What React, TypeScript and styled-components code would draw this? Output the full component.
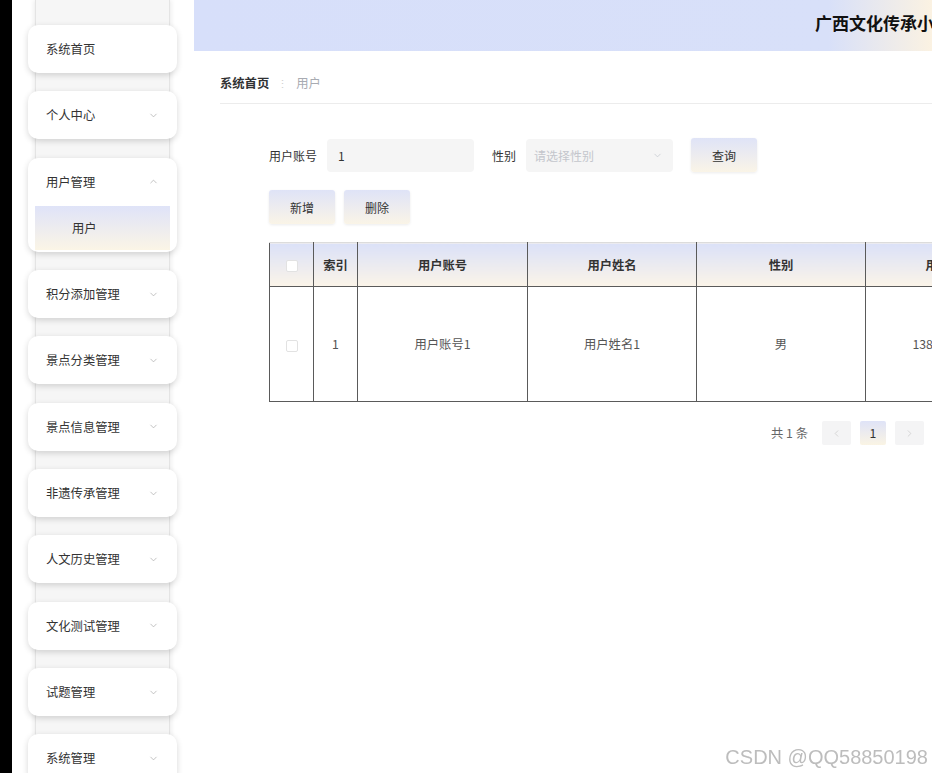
import { createGlobalStyle, styled } from 'styled-components';
import { ChevronDown, ChevronUp, ChevronLeft, ChevronRight } from 'lucide-react';

const GlobalStyle = createGlobalStyle`
  html, body {
    margin: 0;
    padding: 0;
    background: #fff;
    font-family: "Noto Sans CJK SC", "Noto Sans", "Liberation Sans", sans-serif;
    font-size: 13px;
    color: #333;
  }
  * { box-sizing: border-box; }
`;

interface MenuEntry {
  name: string;
  arrow: boolean;
  children?: string[];
}

const menus: MenuEntry[] = [
  { name: '系统首页', arrow: false },
  { name: '个人中心', arrow: true },
  { name: '用户管理', arrow: true, children: ['用户'] },
  { name: '积分添加管理', arrow: true },
  { name: '景点分类管理', arrow: true },
  { name: '景点信息管理', arrow: true },
  { name: '非遗传承管理', arrow: true },
  { name: '人文历史管理', arrow: true },
  { name: '文化测试管理', arrow: true },
  { name: '试题管理', arrow: true },
  { name: '系统管理', arrow: true },
];

const columns = [
  { title: '', width: 44 },
  { title: '索引', width: 44 },
  { title: '用户账号', width: 170 },
  { title: '用户姓名', width: 169 },
  { title: '性别', width: 169 },
  { title: '用户手机', width: 169 },
  { title: '头像', width: 169 },
];

const row = ['', '1', '用户账号1', '用户姓名1', '男', '13823888881', ''];

export default function App() {
  return (
    <>
      <GlobalStyle />
      <Page>
        <Sidebar>
          <MenuColumn>
            {menus.map((m) => (
              <MenuCard key={m.name}>
                <MenuTitle>
                  <span>{m.name}</span>
                  {m.arrow &&
                    (m.children ? (
                      <ChevronUp size={11} strokeWidth={1.5} color="#a8a8a8" />
                    ) : (
                      <ChevronDown size={11} strokeWidth={1.5} color="#a8a8a8" />
                    ))}
                </MenuTitle>
                {m.children?.map((c) => (
                  <SubItem key={c}>{c}</SubItem>
                ))}
              </MenuCard>
            ))}
          </MenuColumn>
        </Sidebar>
        <Main>
          <Header>
            <Title>广西文化传承小程序管理系统</Title>
          </Header>
          <Content>
            <Breadcrumb>
              <Crumb $current>系统首页</Crumb>
              <Sep>⋮</Sep>
              <Crumb>用户</Crumb>
            </Breadcrumb>

            <Panel>
              <SearchRow>
                <Label>用户账号</Label>
                <Field>1</Field>
                <Label $gap>性别</Label>
                <Field $placeholder>
                  <span>请选择性别</span>
                  <ChevronDown size={11} strokeWidth={1.5} color="#c0c4cc" />
                </Field>
                <GradientButton $ml={18}>查询</GradientButton>
              </SearchRow>

              <ActionRow>
                <GradientButton>新增</GradientButton>
                <GradientButton>删除</GradientButton>
              </ActionRow>

              <Table>
                <thead>
                  <tr>
                    {columns.map((c, i) => (
                      <Th key={i} style={{ width: c.width, minWidth: c.width }}>
                        {i === 0 ? <Check /> : c.title}
                      </Th>
                    ))}
                  </tr>
                </thead>
                <tbody>
                  <tr>
                    {row.map((v, i) => (
                      <Td key={i}>{i === 0 ? <Check /> : v}</Td>
                    ))}
                  </tr>
                </tbody>
              </Table>

              <Pager>
                <Total>共 1 条</Total>
                <PageBtn $disabled>
                  <ChevronLeft size={11} strokeWidth={1.5} color="#c8c8c8" />
                </PageBtn>
                <PageBtn $active>1</PageBtn>
                <PageBtn $disabled>
                  <ChevronRight size={11} strokeWidth={1.5} color="#c8c8c8" />
                </PageBtn>
              </Pager>
            </Panel>
          </Content>
        </Main>
      </Page>
      <Watermark>CSDN @QQ58850198</Watermark>
    </>
  );
}

const Page = styled.div`
  display: flex;
  width: 100vw;
  height: 100vh;
  overflow: hidden;
`;

const Sidebar = styled.aside`
  flex: 0 0 194px;
  height: 100%;
  border-left: 12px solid #000;
  background: #fff;
  overflow: hidden;
`;

const MenuColumn = styled.div`
  margin-left: 23px;
  width: 135px;
  min-height: 100%;
  padding-top: 25px;
  display: flex;
  flex-direction: column;
  gap: 18.35px;
  background: #f6f6f6;
  border-left: 1px solid #e4e4e4;
  border-right: 1px solid #e4e4e4;
  box-shadow: 2px 0 4px rgba(0, 0, 0, 0.06), -2px 0 4px rgba(0, 0, 0, 0.06);
`;

const MenuCard = styled.div`
  flex-shrink: 0;
  margin: 0 -8px;
  background: #fff;
  border-radius: 10px;
  box-shadow: 0 2px 6px rgba(0, 0, 0, 0.16);
  overflow: hidden;
`;

const MenuTitle = styled.div`
  height: 48px;
  padding: 0 18px;
  display: flex;
  align-items: center;
  justify-content: space-between;
  color: #333;
  font-size: 12.3px;
`;

const SubItem = styled.div`
  margin: 0 7px 2px;
  height: 44px;
  padding-left: 37px;
  display: flex;
  align-items: center;
  font-size: 12.3px;
  color: #333;
  background: linear-gradient(180deg, #dfe3f8 0%, #fbf5e6 100%);
`;

const Main = styled.main`
  flex: 1;
  min-width: 0;
  overflow: hidden;
`;

const Header = styled.header`
  height: 51px;
  display: flex;
  align-items: center;
  padding-left: 621px;
  background: linear-gradient(90deg, #d7dffa 0%, #d8e0f9 86%, #fbf2e2 100%);
  white-space: nowrap;
  overflow: hidden;
`;

const Title = styled.h1`
  margin: -6px 0 0;
  font-size: 17px;
  font-weight: 700;
  color: #111;
`;

const Content = styled.section`
  padding-left: 26px;
`;

const Breadcrumb = styled.nav`
  height: 53px;
  padding: 22px 0 10px;
  display: flex;
  align-items: center;
  gap: 8px;
  border-bottom: 1px solid #ececec;
`;

const Crumb = styled.span<{ $current?: boolean }>`
  font-size: 12.3px;
  font-weight: ${(p) => (p.$current ? 700 : 400)};
  color: ${(p) => (p.$current ? '#303133' : '#a8abb2')};
`;

const Sep = styled.span`
  color: #d0d0d0;
  font-size: 11px;
`;

const Panel = styled.div`
  padding: 34px 0 0 49px;
`;

const SearchRow = styled.div`
  display: flex;
  align-items: center;
  height: 34px;
`;

const Label = styled.span<{ $gap?: boolean }>`
  margin-left: ${(p) => (p.$gap ? '18px' : '0')};
  margin-right: 10px;
  font-size: 12px;
  color: #333;
`;

const Field = styled.div<{ $placeholder?: boolean }>`
  width: 147px;
  height: 33px;
  display: flex;
  align-items: center;
  justify-content: space-between;
  background: #f5f5f5;
  border-radius: 4px;
  font-size: 12px;
  color: ${(p) => (p.$placeholder ? '#c4c6cc' : '#333')};
  padding-left: ${(p) => (p.$placeholder ? '8px' : '11px')};
  padding-right: 10px;
`;

const GradientButton = styled.button<{ $ml?: number }>`
  margin-left: ${(p) => p.$ml ?? 0}px;
  width: 66px;
  height: 34px;
  border: none;
  border-radius: 3px;
  background: linear-gradient(180deg, #dfe3f7 0%, #faf4e7 100%);
  box-shadow: 0 1px 3px rgba(0, 0, 0, 0.08);
  font-family: inherit;
  font-size: 12px;
  color: #333;
  cursor: pointer;
`;

const ActionRow = styled.div`
  margin-top: 18px;
  display: flex;
  gap: 9px;
`;

const Table = styled.table`
  margin-top: 18px;
  border-collapse: collapse;
  table-layout: fixed;
  border-top: 1px solid #dcdcdc;
  border-left: 1px solid #5a5a5a;
`;

const Th = styled.th`
  height: 44px;
  padding: 0;
  border-right: 1px solid #5a5a5a;
  border-bottom: 1px solid #5a5a5a;
  background: linear-gradient(180deg, #dbe1f8 0%, #fbf4e8 100%);
  font-size: 12.3px;
  font-weight: 700;
  color: #333;
  text-align: center;
`;

const Td = styled.td`
  height: 115px;
  padding: 0;
  border-right: 1px solid #5a5a5a;
  border-bottom: 1px solid #5a5a5a;
  font-size: 12.3px;
  color: #555;
  text-align: center;
  white-space: nowrap;
`;

const Check = styled.span`
  display: inline-block;
  width: 12px;
  height: 12px;
  vertical-align: middle;
  background: #fff;
  border: 1px solid #e2e2e2;
  border-radius: 2px;
`;

const Pager = styled.div`
  margin-top: 19px;
  padding-left: 502px;
  display: flex;
  align-items: center;
  gap: 9px;
`;

const Total = styled.span`
  margin-right: 5px;
  font-size: 12.3px;
  color: #666;
`;

const PageBtn = styled.div<{ $active?: boolean; $disabled?: boolean }>`
  width: ${(p) => (p.$active ? '26px' : '29px')};
  height: 24px;
  display: flex;
  align-items: center;
  justify-content: center;
  border-radius: 2px;
  font-size: 12.3px;
  color: #333;
  background: ${(p) => (p.$active ? 'linear-gradient(180deg, #dfe3f7 0%, #faf4e4 100%)' : '#f4f4f5')};
`;

const Watermark = styled.div`
  position: fixed;
  right: 4px;
  bottom: 4px;
  font-family: "Liberation Sans", Arial, sans-serif;
  font-size: 20px;
  color: #bdbdbd;
  pointer-events: none;
`;
